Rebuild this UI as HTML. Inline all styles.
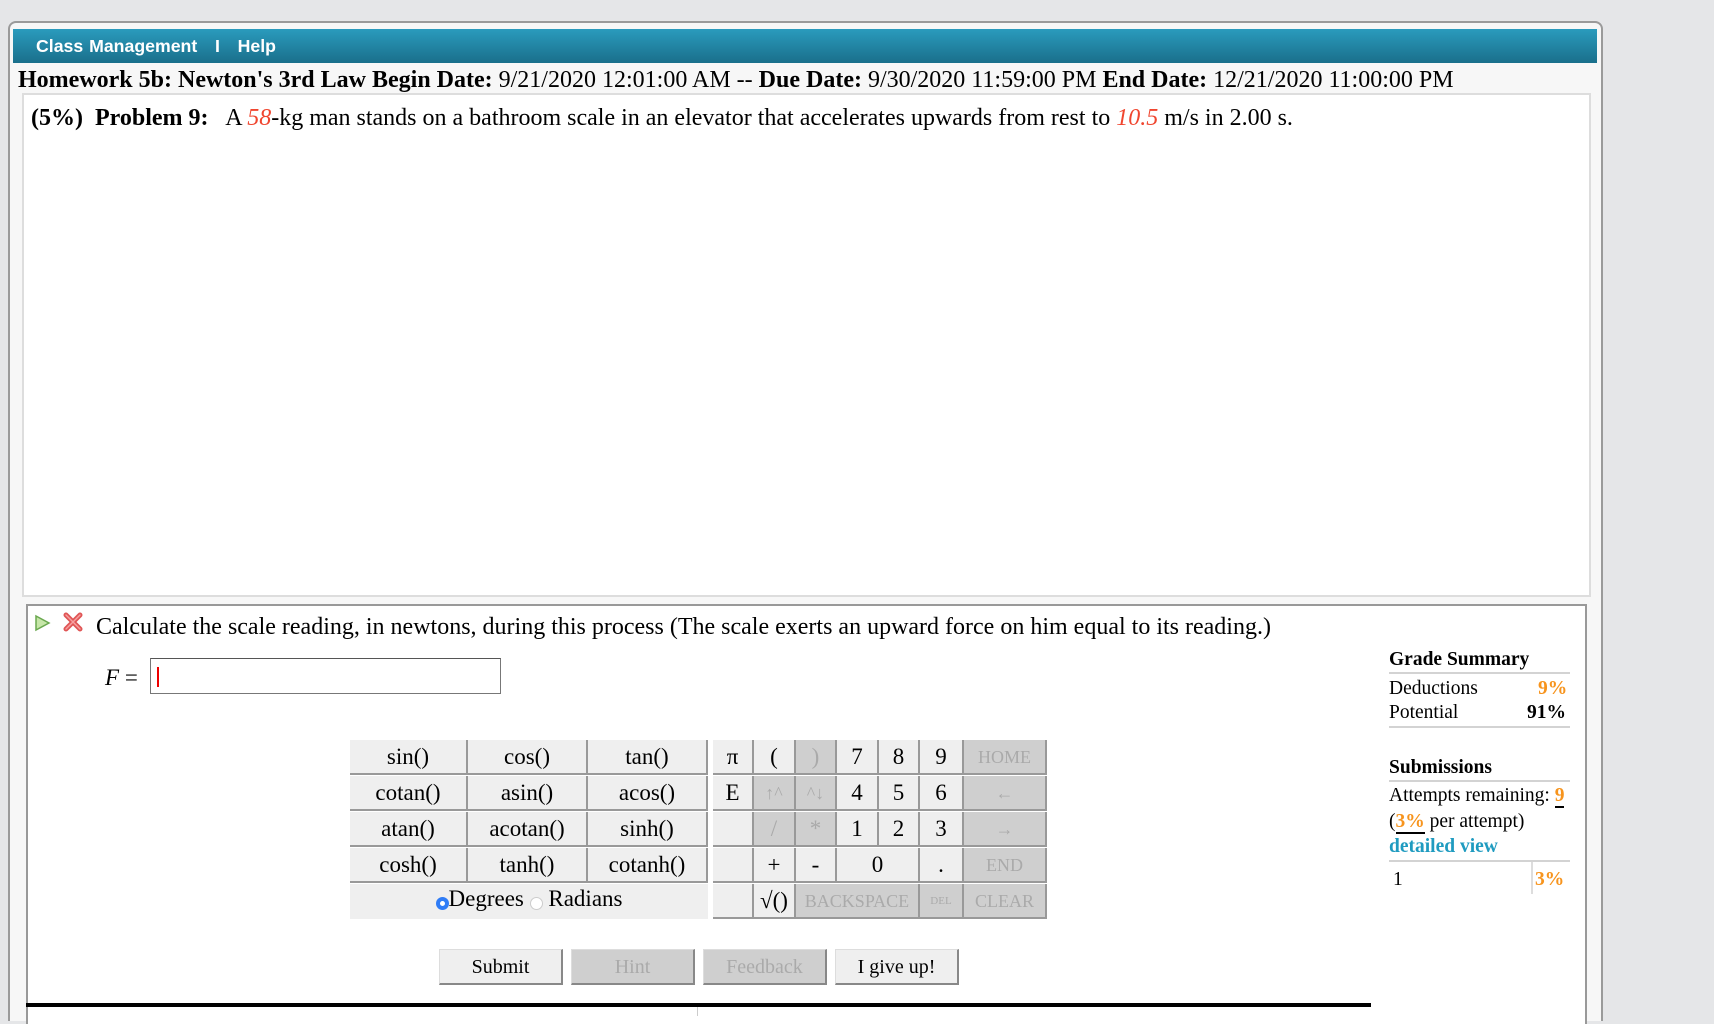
<!DOCTYPE html>
<html><head><meta charset="utf-8"><style>
*{margin:0;padding:0;box-sizing:border-box}
body{width:1714px;height:1016px;background:#e5e6e8;position:relative;overflow:hidden;font-family:"Liberation Serif",serif;color:#000}
.a{position:absolute}
#frame{left:8px;top:21px;width:1595px;height:1000px;background:#f7f7f7;border:2px solid #9a9a9a;border-radius:8px 8px 0 0;border-bottom:none}
#bar{left:13px;top:29px;width:1584px;height:34px;background:linear-gradient(#2a9bbd,#1a6f8b);color:#fff;font:bold 17.7px "Liberation Sans",sans-serif;line-height:34px;padding-left:23px;word-spacing:1px}
#title{left:18px;top:65px;font-size:24px;line-height:30px;white-space:nowrap}
#pbox{left:22px;top:93px;width:1569px;height:504px;background:#fff;border:2px solid #ddd}
#ptext{left:31px;top:105px;font-size:24px;white-space:nowrap}
.r{color:#f0462f;font-style:italic}
#part{left:26px;top:604px;width:1561px;height:420px;background:#fff;border:2px solid #999;border-bottom:none}
#q{left:96px;top:614px;font-size:24px;white-space:nowrap}
#f{left:105px;top:665px;font-size:23px}
#inp{left:150px;top:658px;width:351px;height:36px;border:1px solid #777;border-top-color:#555}
#inp i{position:absolute;left:6px;top:8px;width:2px;height:20px;background:#e00}
.k{position:absolute;height:35px;background:#efefef;border-right:2px solid #999;border-bottom:2px solid #999;text-align:center;font-size:23px;line-height:34px;white-space:nowrap;overflow:hidden}
.g{background:#cfcfcf;color:#aaa}
.s{font-size:18px}
.b{position:absolute;top:949px;width:124px;height:36px;background:#efefef;border-right:2px solid #888;border-bottom:2px solid #888;border-top:1px solid #ddd;border-left:1px solid #ddd;text-align:center;font-size:20px;line-height:34px}
.gs{position:absolute;left:1389px;font-size:19.5px;white-space:nowrap}
.hl{position:absolute;left:1389px;width:181px;height:2px;background:#d3d3d3}
.o{color:#f7941d;font-weight:bold}
</style></head><body>
<div class="a" id="frame"></div>
<div class="a" id="bar">Class Management &nbsp;&nbsp;I&nbsp;&nbsp; Help</div>
<div class="a" id="title"><b>Homework 5b: Newton's 3rd Law Begin Date:</b> 9/21/2020 12:01:00 AM -- <b>Due Date:</b> 9/30/2020 11:59:00 PM <b>End Date:</b> 12/21/2020 11:00:00 PM</div>
<div class="a" id="pbox"></div>
<div class="a" id="ptext"><b>(5%)&nbsp; Problem 9:</b>&nbsp;&nbsp; A <span class="r">58</span>-kg man stands on a bathroom scale in an elevator that accelerates upwards from rest to <span class="r">10.5</span> m/s in 2.00 s.</div>
<div class="a" id="part"></div>
<svg class="a" style="left:33px;top:614px" width="18" height="18"><path d="M3 2 L16 9 L3 16 Z" fill="#c6e6a8" stroke="#6aa84f" stroke-width="1.5"/></svg>
<svg class="a" style="left:62px;top:611px" width="22" height="22"><path d="M4 4 L18 18 M18 4 L4 18" stroke="#e05555" stroke-width="5" stroke-linecap="round"/><path d="M4 4 L18 18 M18 4 L4 18" stroke="#f7a0a0" stroke-width="1.5" stroke-linecap="round"/></svg>
<div class="a" id="q">Calculate the scale reading, in newtons, during this process (The scale exerts an upward force on him equal to its reading.)</div>
<div class="a" id="f"><i>F</i> =</div>
<div class="a" id="inp"><i></i></div>

<div class="k" style="left:350px;top:740px;width:118px">sin()</div>
<div class="k" style="left:468px;top:740px;width:120px">cos()</div>
<div class="k" style="left:588px;top:740px;width:120px">tan()</div>
<div class="k" style="left:350px;top:776px;width:118px">cotan()</div>
<div class="k" style="left:468px;top:776px;width:120px">asin()</div>
<div class="k" style="left:588px;top:776px;width:120px">acos()</div>
<div class="k" style="left:350px;top:812px;width:118px">atan()</div>
<div class="k" style="left:468px;top:812px;width:120px">acotan()</div>
<div class="k" style="left:588px;top:812px;width:120px">sinh()</div>
<div class="k" style="left:350px;top:848px;width:118px">cosh()</div>
<div class="k" style="left:468px;top:848px;width:120px">tanh()</div>
<div class="k" style="left:588px;top:848px;width:120px">cotanh()</div>
<div class="k" style="left:350px;top:884px;width:358px;border:none;height:35px;line-height:30px"><span style="display:inline-block;width:13px;height:13px;border-radius:50%;background:#fff;border:4px solid #2f7cf6;vertical-align:-4px"></span>Degrees <span style="display:inline-block;width:13px;height:13px;border-radius:50%;background:#fff;border:1px solid #ccc;vertical-align:-4px"></span> Radians</div>

<div class="k" style="left:713px;top:740px;width:41px">π</div>
<div class="k" style="left:754px;top:740px;width:42px">(</div>
<div class="k g" style="left:796px;top:740px;width:41px">)</div>
<div class="k" style="left:837px;top:740px;width:42px">7</div>
<div class="k" style="left:879px;top:740px;width:41px">8</div>
<div class="k" style="left:920px;top:740px;width:44px">9</div>
<div class="k g s" style="left:964px;top:740px;width:83px">HOME</div>
<div class="k" style="left:713px;top:776px;width:41px">E</div>
<div class="k g s" style="left:754px;top:776px;width:42px">↑^</div>
<div class="k g s" style="left:796px;top:776px;width:41px">^↓</div>
<div class="k" style="left:837px;top:776px;width:42px">4</div>
<div class="k" style="left:879px;top:776px;width:41px">5</div>
<div class="k" style="left:920px;top:776px;width:44px">6</div>
<div class="k g s" style="left:964px;top:776px;width:83px">←</div>
<div class="k" style="left:713px;top:812px;width:41px"></div>
<div class="k g" style="left:754px;top:812px;width:42px">/</div>
<div class="k g" style="left:796px;top:812px;width:41px">*</div>
<div class="k" style="left:837px;top:812px;width:42px">1</div>
<div class="k" style="left:879px;top:812px;width:41px">2</div>
<div class="k" style="left:920px;top:812px;width:44px">3</div>
<div class="k g s" style="left:964px;top:812px;width:83px">→</div>
<div class="k" style="left:713px;top:848px;width:41px"></div>
<div class="k" style="left:754px;top:848px;width:42px">+</div>
<div class="k" style="left:796px;top:848px;width:41px">-</div>
<div class="k" style="left:837px;top:848px;width:83px">0</div>
<div class="k" style="left:920px;top:848px;width:44px">.</div>
<div class="k g s" style="left:964px;top:848px;width:83px">END</div>
<div class="k" style="left:713px;top:884px;width:41px"></div>
<div class="k" style="left:754px;top:884px;width:42px">√()</div>
<div class="k g s" style="left:796px;top:884px;width:124px">BACKSPACE</div>
<div class="k g" style="left:920px;top:884px;width:44px;font-size:11px">DEL</div>
<div class="k g s" style="left:964px;top:884px;width:83px">CLEAR</div>

<div class="b" style="left:439px">Submit</div>
<div class="b g" style="left:571px;background:#cfcfcf">Hint</div>
<div class="b g" style="left:703px;background:#cfcfcf">Feedback</div>
<div class="b" style="left:835px">I give up!</div>
<div class="a" style="left:26px;top:1003px;width:1345px;height:4px;background:#000"></div>
<div class="a" style="left:697px;top:1007px;width:1px;height:9px;background:#ccc"></div>

<div class="gs" style="top:649px;font-weight:bold">Grade Summary</div>
<div class="hl" style="top:672px"></div>
<div class="gs" style="top:678px">Deductions</div><div class="gs o" style="left:1538px;top:678px">9%</div>
<div class="gs" style="top:702px">Potential</div><div class="gs" style="left:1527px;top:702px;font-weight:bold">91%</div>
<div class="hl" style="top:726px"></div>
<div class="gs" style="top:757px;font-weight:bold">Submissions</div>
<div class="hl" style="top:780px"></div>
<div class="gs" style="top:785px">Attempts remaining: <span class="o" style="border-bottom:2px solid #000">9</span></div>
<div class="gs" style="top:811px">(<span class="o" style="border-bottom:2px solid #000">3%</span> per attempt)</div>
<div class="gs" style="top:836px;color:#1f9bc0;font-weight:bold">detailed view</div>
<div class="hl" style="top:860px"></div>
<div class="gs" style="left:1393px;top:869px">1</div>
<div class="a" style="left:1531px;top:862px;width:2px;height:32px;background:#ddd"></div>
<div class="gs o" style="left:1535px;top:869px">3%</div>
</body></html>
